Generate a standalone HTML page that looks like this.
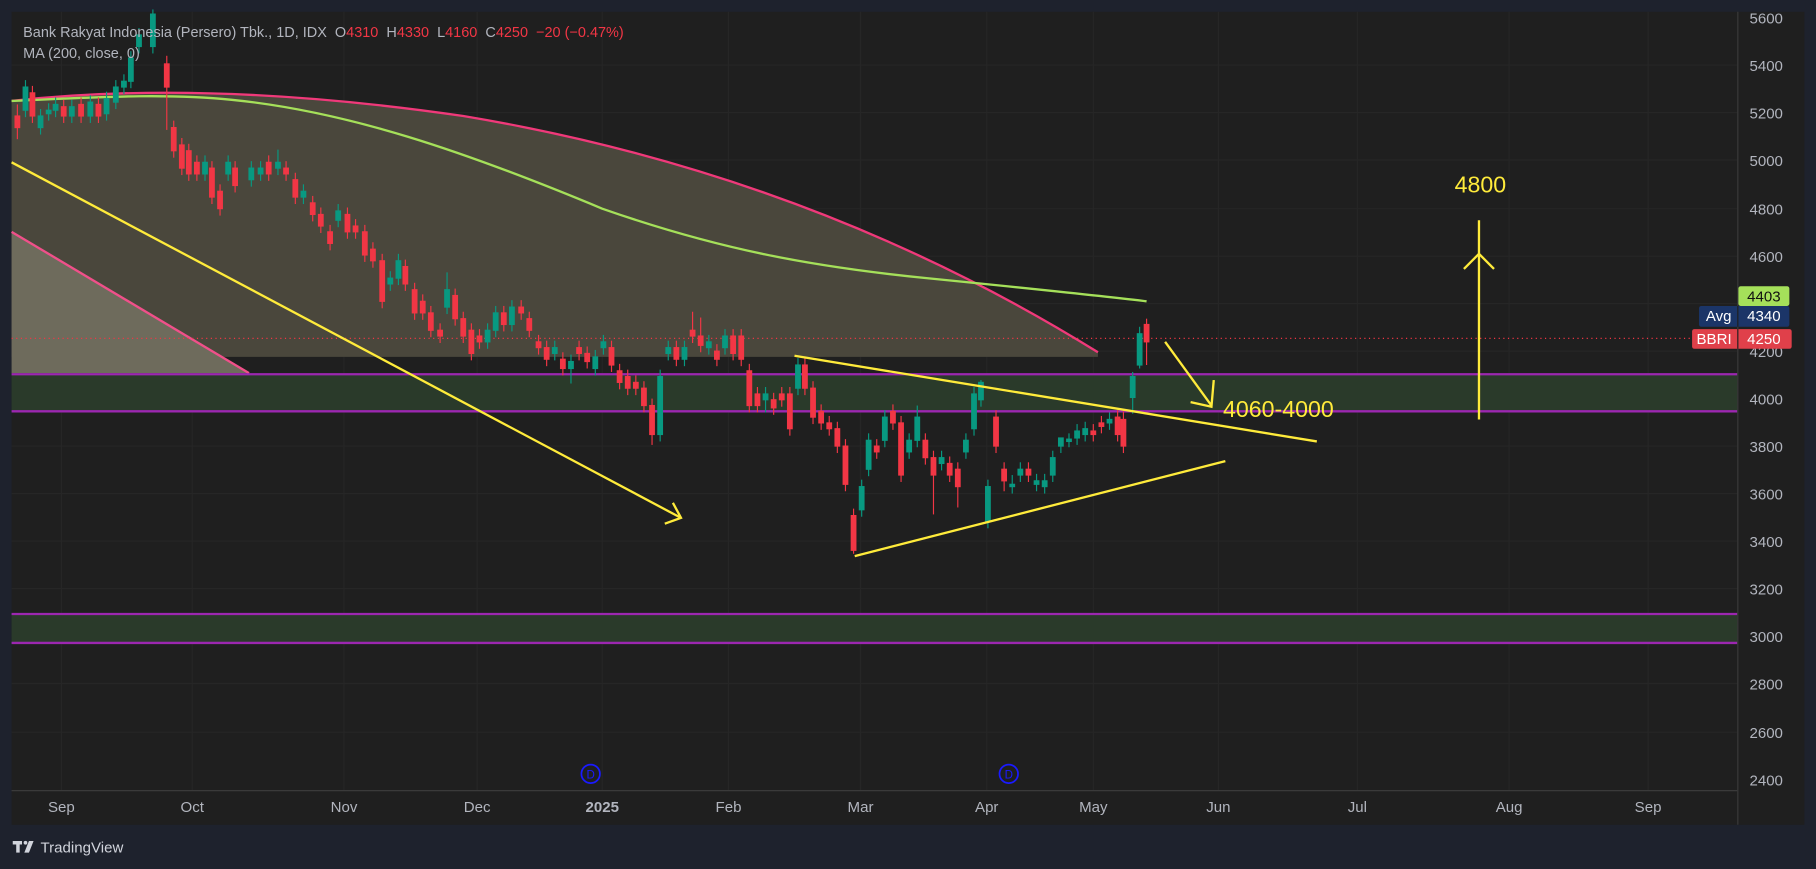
<!DOCTYPE html>
<html><head><meta charset="utf-8"><style>
html,body{margin:0;padding:0;background:#1e222d;width:1816px;height:869px;overflow:hidden}
svg{display:block}
text{font-family:"Liberation Sans",sans-serif}
</style></head><body>
<svg width="1816" height="869" viewBox="0 0 1568 750" xmlns="http://www.w3.org/2000/svg">
<rect x="0" y="0" width="1568" height="750" fill="#1e222d"/>
<rect x="10" y="10" width="1548" height="702" fill="#1f1f1f"/>
<g stroke="#262626" stroke-width="1">
<line x1="10" y1="56" x2="1500" y2="56"/><line x1="10" y1="97" x2="1500" y2="97"/><line x1="10" y1="138" x2="1500" y2="138"/><line x1="10" y1="180" x2="1500" y2="180"/><line x1="10" y1="221" x2="1500" y2="221"/><line x1="10" y1="262" x2="1500" y2="262"/><line x1="10" y1="303" x2="1500" y2="303"/><line x1="10" y1="344" x2="1500" y2="344"/><line x1="10" y1="385" x2="1500" y2="385"/><line x1="10" y1="426" x2="1500" y2="426"/><line x1="10" y1="467" x2="1500" y2="467"/><line x1="10" y1="508" x2="1500" y2="508"/><line x1="10" y1="549" x2="1500" y2="549"/><line x1="10" y1="590" x2="1500" y2="590"/><line x1="10" y1="632" x2="1500" y2="632"/>
<line x1="53" y1="10" x2="53" y2="682"/><line x1="166" y1="10" x2="166" y2="682"/><line x1="297" y1="10" x2="297" y2="682"/><line x1="412" y1="10" x2="412" y2="682"/><line x1="520" y1="10" x2="520" y2="682"/><line x1="629" y1="10" x2="629" y2="682"/><line x1="743" y1="10" x2="743" y2="682"/><line x1="852" y1="10" x2="852" y2="682"/><line x1="944" y1="10" x2="944" y2="682"/><line x1="1052" y1="10" x2="1052" y2="682"/><line x1="1172" y1="10" x2="1172" y2="682"/><line x1="1303" y1="10" x2="1303" y2="682"/><line x1="1423" y1="10" x2="1423" y2="682"/>
</g>
<rect x="10" y="323" width="1490" height="32" fill="#2a3a2a"/>
<rect x="10" y="530" width="1490" height="25" fill="#2a3a2a"/>
<path d="M10,87 Q180,68 400,100 Q700,150 948,304 L948,308 L10,308 Z" fill="#4a473c"/>
<path d="M10,200 L215,322 L10,322 Z" fill="#6e6b5c"/>
<path d="M10,87 Q180,68 400,100 Q700,150 948,304" fill="none" stroke="#f0397a" stroke-width="2"/>
<line x1="10" y1="200" x2="215" y2="322" stroke="#f0508a" stroke-width="2"/>
<g stroke="#9c27b0" stroke-width="2">
<line x1="10" y1="323" x2="1500" y2="323"/><line x1="10" y1="355" x2="1500" y2="355"/>
<line x1="10" y1="530" x2="1500" y2="530"/><line x1="10" y1="555" x2="1500" y2="555"/>
</g>
<path d="M10,87 C80,84 140,80 200,86 C300,96 400,130 520,180 C620,215 700,230 800,240 C880,248 940,254 990,260" fill="none" stroke="#a5e05a" stroke-width="2"/>
<line x1="10" y1="292" x2="1462" y2="292" stroke="#f23645" stroke-width="1" stroke-dasharray="1,3"/>
<g stroke-width="1">
<g fill="#f23645" stroke="#f23645">
<line x1="15" y1="90" x2="15" y2="120"/><rect x="13" y="100" width="4" height="10"/>
<line x1="28" y1="74" x2="28" y2="106"/><rect x="26" y="80" width="4" height="20"/>
<line x1="55" y1="86" x2="55" y2="106"/><rect x="53" y="92" width="4" height="8"/>
<line x1="70" y1="84" x2="70" y2="106"/><rect x="68" y="90" width="4" height="10"/>
<line x1="85" y1="84" x2="85" y2="106"/><rect x="83" y="90" width="4" height="10"/>
<line x1="144" y1="48" x2="144" y2="112"/><rect x="142" y="55" width="4" height="20"/>
<line x1="150" y1="104" x2="150" y2="136"/><rect x="148" y="110" width="4" height="20"/>
<line x1="157" y1="119" x2="157" y2="151"/><rect x="155" y="125" width="4" height="20"/>
<line x1="163" y1="124" x2="163" y2="156"/><rect x="161" y="130" width="4" height="20"/>
<line x1="170" y1="134" x2="170" y2="156"/><rect x="168" y="140" width="4" height="10"/>
<line x1="183" y1="139" x2="183" y2="176"/><rect x="181" y="145" width="4" height="25"/>
<line x1="190" y1="159" x2="190" y2="186"/><rect x="188" y="165" width="4" height="15"/>
<line x1="203" y1="139" x2="203" y2="166"/><rect x="201" y="145" width="4" height="15"/>
<line x1="232" y1="134" x2="232" y2="156"/><rect x="230" y="140" width="4" height="10"/>
<line x1="247" y1="139" x2="247" y2="156"/><rect x="245" y="145" width="4" height="5"/>
<line x1="255" y1="149" x2="255" y2="176"/><rect x="253" y="155" width="4" height="15"/>
<line x1="270" y1="169" x2="270" y2="191"/><rect x="268" y="175" width="4" height="10"/>
<line x1="277" y1="179" x2="277" y2="201"/><rect x="275" y="185" width="4" height="10"/>
<line x1="285" y1="194" x2="285" y2="216"/><rect x="283" y="200" width="4" height="10"/>
<line x1="300" y1="179" x2="300" y2="206"/><rect x="298" y="185" width="4" height="15"/>
<line x1="307" y1="189" x2="307" y2="206"/><rect x="305" y="195" width="4" height="5"/>
<line x1="315" y1="194" x2="315" y2="226"/><rect x="313" y="200" width="4" height="20"/>
<line x1="322" y1="209" x2="322" y2="231"/><rect x="320" y="215" width="4" height="10"/>
<line x1="330" y1="219" x2="330" y2="266"/><rect x="328" y="225" width="4" height="35"/>
<line x1="350" y1="224" x2="350" y2="251"/><rect x="348" y="230" width="4" height="15"/>
<line x1="358" y1="244" x2="358" y2="276"/><rect x="356" y="250" width="4" height="20"/>
<line x1="365" y1="254" x2="365" y2="276"/><rect x="363" y="260" width="4" height="10"/>
<line x1="372" y1="264" x2="372" y2="291"/><rect x="370" y="270" width="4" height="15"/>
<line x1="380" y1="279" x2="380" y2="296"/><rect x="378" y="285" width="4" height="5"/>
<line x1="393" y1="249" x2="393" y2="281"/><rect x="391" y="255" width="4" height="20"/>
<line x1="400" y1="269" x2="400" y2="296"/><rect x="398" y="275" width="4" height="15"/>
<line x1="407" y1="279" x2="407" y2="311"/><rect x="405" y="285" width="4" height="20"/>
<line x1="414" y1="284" x2="414" y2="301"/><rect x="412" y="290" width="4" height="5"/>
<line x1="435" y1="264" x2="435" y2="286"/><rect x="433" y="270" width="4" height="10"/>
<line x1="450" y1="259" x2="450" y2="276"/><rect x="448" y="265" width="4" height="5"/>
<line x1="457" y1="269" x2="457" y2="291"/><rect x="455" y="275" width="4" height="10"/>
<line x1="465" y1="289" x2="465" y2="306"/><rect x="463" y="295" width="4" height="5"/>
<line x1="472" y1="294" x2="472" y2="316"/><rect x="470" y="300" width="4" height="10"/>
<line x1="486" y1="304" x2="486" y2="324"/><rect x="484" y="310" width="4" height="8"/>
<line x1="500" y1="294" x2="500" y2="311"/><rect x="498" y="300" width="4" height="5"/>
<line x1="507" y1="299" x2="507" y2="318"/><rect x="505" y="305" width="4" height="7"/>
<line x1="528" y1="294" x2="528" y2="321"/><rect x="526" y="300" width="4" height="15"/>
<line x1="535" y1="314" x2="535" y2="336"/><rect x="533" y="320" width="4" height="10"/>
<line x1="542" y1="319" x2="542" y2="341"/><rect x="540" y="325" width="4" height="10"/>
<line x1="549" y1="324" x2="549" y2="341"/><rect x="547" y="330" width="4" height="5"/>
<line x1="556" y1="329" x2="556" y2="356"/><rect x="554" y="335" width="4" height="15"/>
<line x1="563" y1="344" x2="563" y2="384"/><rect x="561" y="350" width="4" height="25"/>
<line x1="584" y1="294" x2="584" y2="316"/><rect x="582" y="300" width="4" height="10"/>
<line x1="598" y1="269" x2="598" y2="296"/><rect x="596" y="285" width="4" height="5"/>
<line x1="605" y1="274" x2="605" y2="304"/><rect x="603" y="290" width="4" height="8"/>
<line x1="619" y1="297" x2="619" y2="316"/><rect x="617" y="303" width="4" height="7"/>
<line x1="633" y1="284" x2="633" y2="311"/><rect x="631" y="290" width="4" height="15"/>
<line x1="640" y1="284" x2="640" y2="316"/><rect x="638" y="290" width="4" height="20"/>
<line x1="647" y1="314" x2="647" y2="356"/><rect x="645" y="320" width="4" height="30"/>
<line x1="654" y1="334" x2="654" y2="356"/><rect x="652" y="340" width="4" height="10"/>
<line x1="668" y1="339" x2="668" y2="358"/><rect x="666" y="345" width="4" height="7"/>
<line x1="675" y1="334" x2="675" y2="351"/><rect x="673" y="340" width="4" height="5"/>
<line x1="682" y1="334" x2="682" y2="376"/><rect x="680" y="340" width="4" height="30"/>
<line x1="695" y1="309" x2="695" y2="341"/><rect x="693" y="315" width="4" height="20"/>
<line x1="702" y1="329" x2="702" y2="366"/><rect x="700" y="335" width="4" height="25"/>
<line x1="709" y1="349" x2="709" y2="371"/><rect x="707" y="355" width="4" height="10"/>
<line x1="716" y1="359" x2="716" y2="376"/><rect x="714" y="365" width="4" height="5"/>
<line x1="723" y1="364" x2="723" y2="391"/><rect x="721" y="370" width="4" height="15"/>
<line x1="730" y1="379" x2="730" y2="424"/><rect x="728" y="385" width="4" height="33"/>
<line x1="737" y1="439" x2="737" y2="478"/><rect x="735" y="445" width="4" height="30"/>
<line x1="757" y1="379" x2="757" y2="396"/><rect x="755" y="385" width="4" height="5"/>
<line x1="771" y1="349" x2="771" y2="371"/><rect x="769" y="355" width="4" height="10"/>
<line x1="778" y1="359" x2="778" y2="416"/><rect x="776" y="365" width="4" height="45"/>
<line x1="799" y1="374" x2="799" y2="401"/><rect x="797" y="380" width="4" height="15"/>
<line x1="806" y1="389" x2="806" y2="444"/><rect x="804" y="395" width="4" height="15"/>
<line x1="820" y1="394" x2="820" y2="416"/><rect x="818" y="400" width="4" height="10"/>
<line x1="827" y1="399" x2="827" y2="438"/><rect x="825" y="405" width="4" height="15"/>
<line x1="860" y1="354" x2="860" y2="391"/><rect x="858" y="360" width="4" height="25"/>
<line x1="867" y1="399" x2="867" y2="424"/><rect x="865" y="405" width="4" height="10"/>
<line x1="888" y1="399" x2="888" y2="416"/><rect x="886" y="405" width="4" height="5"/>
<line x1="944" y1="366" x2="944" y2="381"/><rect x="942" y="372" width="4" height="3"/>
<line x1="951" y1="359" x2="951" y2="374"/><rect x="949" y="365" width="4" height="3"/>
<line x1="965" y1="354" x2="965" y2="381"/><rect x="963" y="360" width="4" height="15"/>
<line x1="970" y1="355" x2="970" y2="391"/><rect x="968" y="362" width="4" height="23"/>
<line x1="990" y1="275" x2="990" y2="315"/><rect x="988" y="280" width="4" height="15"/>
</g>
<g fill="#089981" stroke="#089981">
<line x1="22" y1="69" x2="22" y2="101"/><rect x="20" y="75" width="4" height="20"/>
<line x1="35" y1="94" x2="35" y2="116"/><rect x="33" y="100" width="4" height="10"/>
<line x1="42" y1="89" x2="42" y2="104"/><rect x="40" y="95" width="4" height="3"/>
<line x1="48" y1="84" x2="48" y2="101"/><rect x="46" y="90" width="4" height="5"/>
<line x1="62" y1="86" x2="62" y2="106"/><rect x="60" y="92" width="4" height="8"/>
<line x1="78" y1="82" x2="78" y2="106"/><rect x="76" y="88" width="4" height="12"/>
<line x1="92" y1="79" x2="92" y2="104"/><rect x="90" y="85" width="4" height="13"/>
<line x1="100" y1="69" x2="100" y2="94"/><rect x="98" y="75" width="4" height="13"/>
<line x1="107" y1="64" x2="107" y2="81"/><rect x="105" y="70" width="4" height="5"/>
<line x1="113" y1="44" x2="113" y2="76"/><rect x="111" y="50" width="4" height="20"/>
<line x1="120" y1="24" x2="120" y2="46"/><rect x="118" y="30" width="4" height="10"/>
<line x1="132" y1="8" x2="132" y2="46"/><rect x="130" y="12" width="4" height="28"/>
<line x1="177" y1="134" x2="177" y2="156"/><rect x="175" y="140" width="4" height="10"/>
<line x1="197" y1="134" x2="197" y2="156"/><rect x="195" y="140" width="4" height="10"/>
<line x1="217" y1="139" x2="217" y2="161"/><rect x="215" y="145" width="4" height="10"/>
<line x1="225" y1="139" x2="225" y2="156"/><rect x="223" y="145" width="4" height="5"/>
<line x1="240" y1="129" x2="240" y2="151"/><rect x="238" y="140" width="4" height="5"/>
<line x1="262" y1="159" x2="262" y2="176"/><rect x="260" y="165" width="4" height="5"/>
<line x1="292" y1="176" x2="292" y2="196"/><rect x="290" y="182" width="4" height="8"/>
<line x1="337" y1="234" x2="337" y2="251"/><rect x="335" y="240" width="4" height="5"/>
<line x1="344" y1="219" x2="344" y2="246"/><rect x="342" y="225" width="4" height="15"/>
<line x1="386" y1="235" x2="386" y2="271"/><rect x="384" y="250" width="4" height="15"/>
<line x1="421" y1="279" x2="421" y2="301"/><rect x="419" y="285" width="4" height="10"/>
<line x1="428" y1="264" x2="428" y2="291"/><rect x="426" y="270" width="4" height="15"/>
<line x1="442" y1="259" x2="442" y2="286"/><rect x="440" y="265" width="4" height="15"/>
<line x1="479" y1="294" x2="479" y2="311"/><rect x="477" y="300" width="4" height="5"/>
<line x1="493" y1="306" x2="493" y2="331"/><rect x="491" y="312" width="4" height="6"/>
<line x1="514" y1="302" x2="514" y2="324"/><rect x="512" y="308" width="4" height="10"/>
<line x1="521" y1="289" x2="521" y2="306"/><rect x="519" y="295" width="4" height="5"/>
<line x1="570" y1="319" x2="570" y2="381"/><rect x="568" y="325" width="4" height="50"/>
<line x1="577" y1="294" x2="577" y2="311"/><rect x="575" y="300" width="4" height="5"/>
<line x1="591" y1="294" x2="591" y2="316"/><rect x="589" y="300" width="4" height="10"/>
<line x1="612" y1="289" x2="612" y2="306"/><rect x="610" y="295" width="4" height="5"/>
<line x1="626" y1="284" x2="626" y2="306"/><rect x="624" y="290" width="4" height="10"/>
<line x1="661" y1="334" x2="661" y2="356"/><rect x="659" y="340" width="4" height="5"/>
<line x1="689" y1="309" x2="689" y2="341"/><rect x="687" y="315" width="4" height="20"/>
<line x1="744" y1="414" x2="744" y2="446"/><rect x="742" y="420" width="4" height="20"/>
<line x1="750" y1="374" x2="750" y2="411"/><rect x="748" y="380" width="4" height="25"/>
<line x1="764" y1="354" x2="764" y2="386"/><rect x="762" y="360" width="4" height="20"/>
<line x1="785" y1="374" x2="785" y2="396"/><rect x="783" y="380" width="4" height="10"/>
<line x1="792" y1="350" x2="792" y2="386"/><rect x="790" y="360" width="4" height="20"/>
<line x1="813" y1="389" x2="813" y2="406"/><rect x="811" y="395" width="4" height="5"/>
<line x1="834" y1="374" x2="834" y2="396"/><rect x="832" y="380" width="4" height="10"/>
<line x1="841" y1="334" x2="841" y2="376"/><rect x="839" y="340" width="4" height="30"/>
<line x1="847" y1="328" x2="847" y2="351"/><rect x="845" y="330" width="4" height="15"/>
<line x1="853" y1="414" x2="853" y2="456"/><rect x="851" y="420" width="4" height="30"/>
<line x1="874" y1="410" x2="874" y2="426"/><rect x="872" y="418" width="4" height="2"/>
<line x1="881" y1="399" x2="881" y2="416"/><rect x="879" y="405" width="4" height="5"/>
<line x1="895" y1="409" x2="895" y2="424"/><rect x="893" y="415" width="4" height="3"/>
<line x1="902" y1="409" x2="902" y2="426"/><rect x="900" y="415" width="4" height="5"/>
<line x1="909" y1="389" x2="909" y2="416"/><rect x="907" y="395" width="4" height="15"/>
<line x1="916" y1="379" x2="916" y2="391"/><rect x="914" y="378" width="4" height="7"/>
<line x1="923" y1="374" x2="923" y2="386"/><rect x="921" y="379" width="4" height="2"/>
<line x1="930" y1="366" x2="930" y2="384"/><rect x="928" y="372" width="4" height="6"/>
<line x1="937" y1="364" x2="937" y2="381"/><rect x="935" y="370" width="4" height="5"/>
<line x1="958" y1="356" x2="958" y2="371"/><rect x="956" y="362" width="4" height="3"/>
<line x1="978" y1="321" x2="978" y2="357"/><rect x="976" y="325" width="4" height="18"/>
<line x1="984" y1="282" x2="984" y2="318"/><rect x="982" y="288" width="4" height="27"/>
</g>
</g>
<g stroke="#ffeb3b" stroke-width="2" fill="none">
<line x1="10" y1="140" x2="588" y2="447"/>
<path d="M581,434 L588,447 L574,452"/>
<line x1="686" y1="307" x2="1137" y2="381"/>
<line x1="738" y1="480" x2="1058" y2="398"/>
<line x1="1006" y1="295" x2="1046" y2="350"/>
<path d="M1048,328 L1046,351 L1028,347"/>
<line x1="1277" y1="362" x2="1277" y2="190"/>
<path d="M1264,232 L1277,219 L1290,232"/>
</g>
<text x="1256" y="166" font-size="20" fill="#ffeb3b">4800</text>
<text x="1056" y="360" font-size="20" fill="#ffeb3b">4060-4000</text>
<g stroke="#1a1aff" stroke-width="1.5" fill="none"><circle cx="510" cy="668" r="8"/><circle cx="871" cy="668" r="8"/></g>
<text x="510" y="672" font-size="10" fill="#1a1aff" text-anchor="middle">D</text>
<text x="871" y="672" font-size="10" fill="#1a1aff" text-anchor="middle">D</text>
<text x="20" y="32" font-size="12.5" fill="#b2b5be" xml:space="preserve" style="white-space:pre">Bank Rakyat Indonesia (Persero) Tbk., 1D, IDX  O<tspan fill="#f23645">4310</tspan>  H<tspan fill="#f23645">4330</tspan>  L<tspan fill="#f23645">4160</tspan>  C<tspan fill="#f23645">4250</tspan>  <tspan fill="#f23645">−20 (−0.47%)</tspan></text>
<text x="20" y="50" font-size="12.5" fill="#b2b5be">MA (200, close, 0)</text>
<line x1="1500.5" y1="10" x2="1500.5" y2="712" stroke="#3a3a3a"/>
<line x1="10" y1="682.5" x2="1500" y2="682.5" stroke="#3a3a3a"/>
<g font-size="13" fill="#b2b5be" text-anchor="middle">
<text x="1525" y="20">5600</text><text x="1525" y="61">5400</text><text x="1525" y="102">5200</text><text x="1525" y="143">5000</text><text x="1525" y="185">4800</text><text x="1525" y="226">4600</text><text x="1525" y="308">4200</text><text x="1525" y="349">4000</text><text x="1525" y="390">3800</text><text x="1525" y="431">3600</text><text x="1525" y="472">3400</text><text x="1525" y="513">3200</text><text x="1525" y="554">3000</text><text x="1525" y="595">2800</text><text x="1525" y="637">2600</text><text x="1525" y="678">2400</text>
<text x="53" y="701">Sep</text><text x="166" y="701">Oct</text><text x="297" y="701">Nov</text><text x="412" y="701">Dec</text><text x="520" y="701" font-weight="bold">2025</text><text x="629" y="701">Feb</text><text x="743" y="701">Mar</text><text x="852" y="701">Apr</text><text x="944" y="701">May</text><text x="1052" y="701">Jun</text><text x="1172" y="701">Jul</text><text x="1303" y="701">Aug</text><text x="1423" y="701">Sep</text>
</g>
<rect x="1501" y="247" width="44" height="17" rx="2" fill="#a5e05a"/>
<text x="1523" y="260" font-size="13" fill="#111" text-anchor="middle">4403</text>
<rect x="1467" y="264" width="78" height="18" rx="2" fill="#1b3568"/>
<text x="1484" y="277" font-size="13" fill="#fff" text-anchor="middle">Avg</text>
<text x="1523" y="277" font-size="13" fill="#fff" text-anchor="middle">4340</text>
<line x1="1500.5" y1="264" x2="1500.5" y2="282" stroke="#1f1f1f"/>
<rect x="1461" y="284" width="86" height="17" rx="2" fill="#e0404a"/>
<text x="1480" y="297" font-size="13" fill="#fff" text-anchor="middle">BBRI</text>
<text x="1523" y="297" font-size="13" fill="#fff" text-anchor="middle">4250</text>
<line x1="1500.5" y1="284" x2="1500.5" y2="301" stroke="#1f1f1f"/>
<g fill="#d1d4dc"><rect x="11" y="726" width="8" height="3"/><rect x="14" y="726" width="3" height="10"/><circle cx="22" cy="727.5" r="1.6"/><path d="M25,726 L29,726 L25,736 L21,736 Z"/></g>
<text x="35" y="736" font-size="13" fill="#d1d4dc">TradingView</text>
</svg>
</body></html>
